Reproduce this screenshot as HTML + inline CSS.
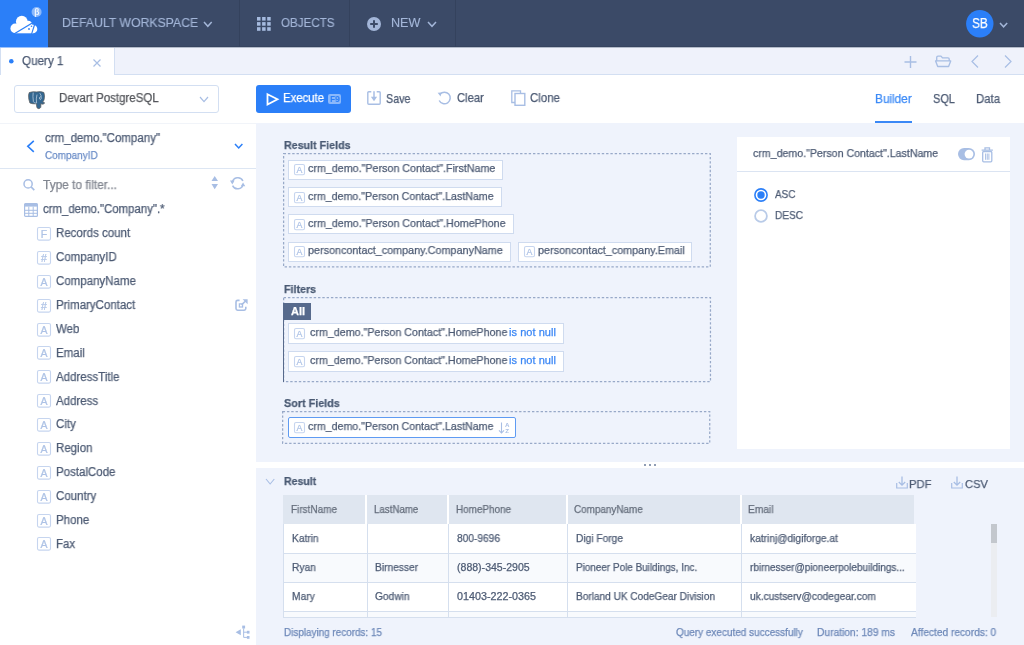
<!DOCTYPE html><html><head><meta charset="utf-8"><style>
html,body{margin:0;padding:0;width:1024px;height:645px;overflow:hidden;background:#fff;font-family:"Liberation Sans",sans-serif;}
.t{position:absolute;white-space:nowrap;line-height:16px;-webkit-text-stroke:0.25px currentColor;will-change:transform;}
.r{position:absolute;box-sizing:border-box;}
svg.r{overflow:visible;will-change:transform}
</style></head><body>
<div class="r" style="left:0.00px;top:0.00px;width:1024.00px;height:47.00px;background:#3b4a67"></div>
<div class="r" style="left:0.00px;top:46.00px;width:1024.00px;height:1.00px;background:#36445f"></div>
<div class="r" style="left:0.00px;top:47.00px;width:1024.00px;height:1.00px;background:#b3bbca"></div>
<div class="r" style="left:0.00px;top:0.00px;width:48.00px;height:47.00px;background:#2b7ff8"></div>
<div class="r" style="left:0.00px;top:47.00px;width:48.00px;height:1.00px;background:#9cc2fb"></div>
<svg class="r" style="left:0.00px;top:0.00px" width="48" height="48" viewBox="0 0 48 48">
<g fill="#fff"><circle cx="15.2" cy="28.4" r="4.8"/><circle cx="21.8" cy="21.6" r="5.9"/><circle cx="28.2" cy="25" r="4.2"/><circle cx="33" cy="29" r="4.3"/><rect x="15" y="25" width="18" height="8.3"/></g>
<path d="M13.5 34.2 L33.5 22.2" stroke="#2b7ff8" stroke-width="1.3"/>
<path d="M31.6 34 L34.6 24.5" stroke="#2b7ff8" stroke-width="1.1"/>
<circle cx="29" cy="29" r="0.9" fill="#2b7ff8"/><circle cx="31.5" cy="26.2" r="0.8" fill="#2b7ff8"/>
<circle cx="36.6" cy="12" r="5" fill="#fff" fill-opacity="0.45"/>
<text x="36.8" y="15.3" font-size="8.5" text-anchor="middle" fill="#ffffff" fill-opacity="0.85" font-family="Liberation Sans" font-weight="700">β</text>
</svg>
<div class="t" style="left:61.70px;top:15.43px;font-size:12.6px;color:#a3b6d8;transform:scaleX(0.9731);transform-origin:0 0;-webkit-text-stroke:0.15px">DEFAULT WORKSPACE</div>
<svg class="r" style="left:202.30px;top:20.20px" width="11.699999999999989" height="8.3" viewBox="0 0 11.699999999999989 8.3"><path d="M2 2 L5.849999999999994 6.300000000000001 L9.699999999999989 2" fill="none" stroke="#a3b6d8" stroke-width="1.5"/></svg>
<div class="r" style="left:239.00px;top:0.00px;width:1.00px;height:47.00px;background:#34425d"></div>
<div class="r" style="left:349.00px;top:0.00px;width:1.00px;height:47.00px;background:#34425d"></div>
<div class="r" style="left:455.00px;top:0.00px;width:1.00px;height:47.00px;background:#34425d"></div>
<svg class="r" style="left:256.90px;top:16.90px" width="14" height="14" viewBox="0 0 14 14"><rect x="0.00" y="0.00" width="3.5" height="3.6" fill="#a6bbdf"/><rect x="5.10" y="0.00" width="3.5" height="3.6" fill="#a6bbdf"/><rect x="10.20" y="0.00" width="3.5" height="3.6" fill="#a6bbdf"/><rect x="0.00" y="5.10" width="3.5" height="3.6" fill="#a6bbdf"/><rect x="5.10" y="5.10" width="3.5" height="3.6" fill="#a6bbdf"/><rect x="10.20" y="5.10" width="3.5" height="3.6" fill="#a6bbdf"/><rect x="0.00" y="10.20" width="3.5" height="3.6" fill="#a6bbdf"/><rect x="5.10" y="10.20" width="3.5" height="3.6" fill="#a6bbdf"/><rect x="10.20" y="10.20" width="3.5" height="3.6" fill="#a6bbdf"/></svg>
<div class="t" style="left:281.30px;top:15.23px;font-size:12.6px;color:#a3b6d8;transform:scaleX(0.9209);transform-origin:0 0;-webkit-text-stroke:0.15px">OBJECTS</div>
<svg class="r" style="left:367.00px;top:17.00px" width="14" height="14" viewBox="0 0 14 14"><circle cx="7" cy="7" r="7" fill="#a3b6d8"/><path d="M7 3.2V10.8M3.2 7H10.8" stroke="#3b4a67" stroke-width="2"/></svg>
<div class="t" style="left:390.70px;top:15.03px;font-size:12.6px;color:#a3b6d8;transform:scaleX(0.9867);transform-origin:0 0;-webkit-text-stroke:0.15px">NEW</div>
<svg class="r" style="left:426.00px;top:20.20px" width="12" height="8.3" viewBox="0 0 12 8.3"><path d="M2 2 L6.0 6.300000000000001 L10 2" fill="none" stroke="#a3b6d8" stroke-width="1.5"/></svg>
<svg class="r" style="left:966.00px;top:10.00px" width="28" height="28" viewBox="0 0 28 28"><circle cx="13.8" cy="13.8" r="13.7" fill="#2b7ff8"/></svg>
<div class="t" style="left:971.60px;top:15.38px;font-size:14.2px;color:#ffffff;transform:scaleX(0.8343);transform-origin:0 0;">SB</div>
<svg class="r" style="left:998.00px;top:20.50px" width="11.200000000000045" height="7.800000000000001" viewBox="0 0 11.200000000000045 7.800000000000001"><path d="M2 2 L5.600000000000023 5.800000000000001 L9.200000000000045 2" fill="none" stroke="#a3b6d8" stroke-width="1.5"/></svg>
<div class="r" style="left:0.00px;top:48.00px;width:1024.00px;height:27.00px;background:#eff2fb;border-bottom:1px solid #d3dff2"></div>
<div class="r" style="left:0.00px;top:48.00px;width:115.00px;height:27.00px;background:#fff;border-left:1px solid #d3dff2;border-right:1px solid #d3dff2"></div>
<svg class="r" style="left:9.40px;top:58.80px" width="5" height="5" viewBox="0 0 5 5"><circle cx="2.3" cy="2.3" r="2.3" fill="#2b7ff8"/></svg>
<div class="t" style="left:21.80px;top:52.50px;font-size:12.1px;color:#4d5b74;transform:scaleX(0.9621);transform-origin:0 0;">Query 1</div>
<svg class="r" style="left:92.70px;top:59.20px" width="8" height="8" viewBox="0 0 8 8"><path d="M0.5 0.5L7.5 7.5M7.5 0.5L0.5 7.5" stroke="#a8bee4" stroke-width="1.2"/></svg>
<svg class="r" style="left:904.00px;top:55.50px" width="13" height="12" viewBox="0 0 13 12"><path d="M6.5 0V12M0.5 6H12.5" stroke="#a8bee4" stroke-width="1.4"/></svg>
<svg class="r" style="left:930.00px;top:50.00px" width="30" height="22" viewBox="0 0 30 22"><path d="M6.7 10.6 V7.4 Q6.7 6.1 8 6.1 H11 L12.5 7.9 H18 Q19.2 7.9 19.2 9.1 V10.6 M5.6 10.9 H20.7 L18.6 16.5 H7.7 Z" fill="none" stroke="#a8bee4" stroke-width="1.35" stroke-linejoin="round"/></svg>
<svg class="r" style="left:971.00px;top:55.00px" width="8" height="13" viewBox="0 0 8 13"><path d="M7 0.5 L1 6.5 L7 12.5" fill="none" stroke="#a8bee4" stroke-width="1.2"/></svg>
<svg class="r" style="left:1004.00px;top:55.00px" width="8" height="13" viewBox="0 0 8 13"><path d="M1 0.5 L7 6.5 L1 12.5" fill="none" stroke="#a8bee4" stroke-width="1.2"/></svg>
<div class="r" style="left:14.00px;top:85.00px;width:204.50px;height:27.50px;border:1px solid #d3dff2;border-radius:3px;background:#fff"></div>
<svg class="r" style="left:28.00px;top:91.00px" width="17" height="18.5" viewBox="0 0 17 18.5"><path d="M1.2 1.6 Q4.5 0.2 8.6 0.9 Q13 0.1 15.9 1.5 Q17 4.5 16.2 8.2 Q15.7 10.2 14.6 11 L16.4 11.6 Q16.9 12.6 15.2 13.1 Q13.6 13.3 12.9 12.6 L12.8 16.3 Q12 17.9 10.1 17.6 Q8.6 17.1 8.6 15.2 L8.5 12.9 Q4.2 13 1.9 12 Q0.4 8.2 0.5 4.3 Z" fill="#336791" stroke="#5a5a5a" stroke-width="0.7"/>
<path d="M5.2 1.6 Q4.6 5 5.4 10.6 Q6.2 12.4 8.4 12.2 M8.6 12 Q7.8 8 9 3.6 M11.8 2.2 Q13.6 4 13.2 7.5 Q12.5 9.5 11.6 8 Q10.8 6.2 12.8 5.6" fill="none" stroke="#d6e2f0" stroke-width="0.65"/></svg>
<div class="t" style="left:59.30px;top:89.84px;font-size:12px;color:#54565b;transform:scaleX(0.9587);transform-origin:0 0;">Devart PostgreSQL</div>
<svg class="r" style="left:198.10px;top:95.00px" width="12.0" height="8.700000000000003" viewBox="0 0 12.0 8.700000000000003"><path d="M2 2 L6.0 6.700000000000003 L10.0 2" fill="none" stroke="#a8bee4" stroke-width="1.2"/></svg>
<div class="r" style="left:256.00px;top:85.00px;width:95.00px;height:28.00px;background:#2b7ff8;border-radius:3px"></div>
<svg class="r" style="left:266.00px;top:93.00px" width="13" height="13" viewBox="0 0 13 13"><path d="M1.5 1.2 L11.5 6.3 L1.5 11.5 Z" fill="none" stroke="#fff" stroke-width="1.8" stroke-linejoin="miter"/></svg>
<div class="t" style="left:282.90px;top:90.37px;font-size:12.2px;color:#ffffff;transform:scaleX(0.9331);transform-origin:0 0;">Execute</div>
<div class="r" style="left:328.00px;top:94.00px;width:13.40px;height:9.90px;background:rgba(255,255,255,0.45);border-radius:2px"></div>
<div class="t" style="left:329.70px;top:90.77px;font-size:9.6px;color:#2b7ff8;font-weight:700;transform:scaleX(0.8926);transform-origin:0 0;-webkit-text-stroke:0">F9</div>
<svg class="r" style="left:367.00px;top:91.00px" width="14" height="14" viewBox="0 0 14 14"><path d="M4.3 0.8 H1.8 Q0.8 0.8 0.8 1.8 V12.2 Q0.8 13.2 1.8 13.2 H12.2 Q13.2 13.2 13.2 12.2 V1.8 Q13.2 0.8 12.2 0.8 H9.7" fill="none" stroke="#a8bee4" stroke-width="1.4"/><path d="M7 0.3 V7" stroke="#a8bee4" stroke-width="1.5"/><path d="M3.9 5.8 H10.1 L7 10.3Z" fill="#a8bee4"/></svg>
<div class="t" style="left:385.90px;top:90.77px;font-size:12.2px;color:#4d5b74;transform:scaleX(0.8783);transform-origin:0 0;">Save</div>
<svg class="r" style="left:437.00px;top:90.80px" width="15" height="14.5" viewBox="0 0 15 14.5"><path d="M3 3.2 A5.8 5.8 0 1 1 2.2 9.5" fill="none" stroke="#a8bee4" stroke-width="1.5"/><path d="M0.6 1.8 L4.4 1.6 L3.6 5.6 Z" fill="#a8bee4"/></svg>
<div class="t" style="left:456.70px;top:90.47px;font-size:12.2px;color:#4d5b74;transform:scaleX(0.9236);transform-origin:0 0;">Clear</div>
<svg class="r" style="left:511.00px;top:90.00px" width="15" height="16" viewBox="0 0 15 16"><path d="M4 12.5 H0.8 V0.8 H9.5 V3.5" fill="none" stroke="#a8bee4" stroke-width="1.3"/><rect x="4" y="3.5" width="9.8" height="11.8" fill="none" stroke="#a8bee4" stroke-width="1.4"/></svg>
<div class="t" style="left:530.20px;top:90.47px;font-size:12.2px;color:#4d5b74;transform:scaleX(0.9421);transform-origin:0 0;">Clone</div>
<div class="t" style="left:874.90px;top:90.97px;font-size:12.2px;color:#3d8bf7;transform:scaleX(0.9674);transform-origin:0 0;">Builder</div>
<div class="r" style="left:875.00px;top:121.00px;width:37.00px;height:2.00px;background:#3a88f6"></div>
<div class="t" style="left:932.50px;top:90.97px;font-size:12.2px;color:#4d5b74;transform:scaleX(0.9020);transform-origin:0 0;">SQL</div>
<div class="t" style="left:975.60px;top:90.97px;font-size:12.2px;color:#4d5b74;transform:scaleX(0.9359);transform-origin:0 0;">Data</div>
<div class="r" style="left:0.00px;top:123.00px;width:256.00px;height:522.00px;background:#fff"></div>
<div class="r" style="left:0.00px;top:123.00px;width:256.00px;height:1.00px;background:#f1f4f9"></div>
<svg class="r" style="left:26.00px;top:139.50px" width="9" height="13" viewBox="0 0 9 13"><path d="M7.8 0.8 L1.8 6.3 L7.8 11.8" fill="none" stroke="#2b7ff8" stroke-width="1.6"/></svg>
<div class="t" style="left:44.70px;top:129.54px;font-size:12px;color:#4d5b74;transform:scaleX(0.9591);transform-origin:0 0;">crm_demo.&quot;Company&quot;</div>
<div class="t" style="left:44.70px;top:147.06px;font-size:10.8px;color:#6a8cc7;transform:scaleX(0.9243);transform-origin:0 0;">CompanyID</div>
<svg class="r" style="left:233.30px;top:142.30px" width="11.399999999999977" height="8.0" viewBox="0 0 11.399999999999977 8.0"><path d="M2 2 L5.699999999999989 6.0 L9.399999999999977 2" fill="none" stroke="#2b7ff8" stroke-width="1.5"/></svg>
<div class="r" style="left:0.00px;top:168.00px;width:256.00px;height:1.00px;background:#dde6f3"></div>
<svg class="r" style="left:23.00px;top:178.50px" width="13" height="13" viewBox="0 0 13 13"><circle cx="5.1" cy="4.9" r="4.1" fill="none" stroke="#a8bee4" stroke-width="1.5"/><path d="M8.1 7.9 L11.3 11.1" stroke="#a8bee4" stroke-width="1.6"/></svg>
<div class="t" style="left:43.40px;top:176.74px;font-size:12px;color:#80858f;transform:scaleX(0.9906);transform-origin:0 0;">Type to filter...</div>
<svg class="r" style="left:211.00px;top:176.00px" width="8" height="14" viewBox="0 0 8 14"><path d="M0.5 5 L3.7 0 L7 5Z M0.5 8 L3.7 13.2 L7 8Z" fill="#a8bee4"/></svg>
<svg class="r" style="left:229.50px;top:175.50px" width="16" height="14.5" viewBox="0 0 16 14.5"><path d="M2.4 6.6 A5.5 5.5 0 0 1 12.9 5 M13 8.3 A5.5 5.5 0 0 1 2.6 9.6" fill="none" stroke="#a8bee4" stroke-width="1.5"/><path d="M0 4.6 L4.6 4.6 L2.3 8.4Z M10.8 10.2 L15.3 10.2 L13.05 6.4Z" fill="#a8bee4"/></svg>
<svg class="r" style="left:24.00px;top:203.00px" width="14" height="14" viewBox="0 0 14 14"><rect x="0.6" y="0.6" width="12.8" height="12.8" rx="1" fill="none" stroke="#a8bee4" stroke-width="1.2"/><rect x="0.6" y="0.6" width="12.8" height="3" fill="#a8bee4"/><path d="M0.6 7.3H13.4M0.6 10.3H13.4M4.8 3.6V13.4M9.2 3.6V13.4" stroke="#a8bee4" stroke-width="1"/></svg>
<div class="t" style="left:43.00px;top:200.84px;font-size:12px;color:#4d5b74;transform:scaleX(0.9499);transform-origin:0 0;">crm_demo.&quot;Company&quot;.*</div>
<svg class="r" style="left:37.10px;top:227.00px" width="14" height="13.6" viewBox="0 0 14 13.6"><rect x="0.5" y="0.5" width="13" height="12.6" rx="1.5" fill="#fff" stroke="#c6d5ef" stroke-width="1.1"/><text x="7.0" y="10.5275" font-size="10.5" text-anchor="middle" fill="#aec3e6" stroke="#aec3e6" stroke-width="0.25" font-family="Liberation Sans">F</text></svg>
<div class="t" style="left:56.30px;top:225.34px;font-size:12px;color:#4d5b74;transform:scaleX(0.9584);transform-origin:0 0;">Records count</div>
<svg class="r" style="left:37.10px;top:250.88px" width="14" height="13.6" viewBox="0 0 14 13.6"><rect x="0.5" y="0.5" width="13" height="12.6" rx="1.5" fill="#fff" stroke="#c6d5ef" stroke-width="1.1"/><text x="7.0" y="10.5275" font-size="10.5" text-anchor="middle" fill="#aec3e6" stroke="#aec3e6" stroke-width="0.25" font-family="Liberation Sans">#</text></svg>
<div class="t" style="left:56.30px;top:249.22px;font-size:12px;color:#4d5b74;transform:scaleX(0.9583);transform-origin:0 0;">CompanyID</div>
<svg class="r" style="left:37.10px;top:274.76px" width="14" height="13.6" viewBox="0 0 14 13.6"><rect x="0.5" y="0.5" width="13" height="12.6" rx="1.5" fill="#fff" stroke="#c6d5ef" stroke-width="1.1"/><text x="7.0" y="10.5275" font-size="10.5" text-anchor="middle" fill="#aec3e6" stroke="#aec3e6" stroke-width="0.25" font-family="Liberation Sans">A</text></svg>
<div class="t" style="left:56.30px;top:273.10px;font-size:12px;color:#4d5b74;transform:scaleX(0.9584);transform-origin:0 0;">CompanyName</div>
<svg class="r" style="left:37.10px;top:298.64px" width="14" height="13.6" viewBox="0 0 14 13.6"><rect x="0.5" y="0.5" width="13" height="12.6" rx="1.5" fill="#fff" stroke="#c6d5ef" stroke-width="1.1"/><text x="7.0" y="10.5275" font-size="10.5" text-anchor="middle" fill="#aec3e6" stroke="#aec3e6" stroke-width="0.25" font-family="Liberation Sans">#</text></svg>
<div class="t" style="left:56.30px;top:296.98px;font-size:12px;color:#4d5b74;transform:scaleX(0.9584);transform-origin:0 0;">PrimaryContact</div>
<svg class="r" style="left:37.10px;top:322.52px" width="14" height="13.6" viewBox="0 0 14 13.6"><rect x="0.5" y="0.5" width="13" height="12.6" rx="1.5" fill="#fff" stroke="#c6d5ef" stroke-width="1.1"/><text x="7.0" y="10.5275" font-size="10.5" text-anchor="middle" fill="#aec3e6" stroke="#aec3e6" stroke-width="0.25" font-family="Liberation Sans">A</text></svg>
<div class="t" style="left:56.30px;top:320.86px;font-size:12px;color:#4d5b74;transform:scaleX(0.9585);transform-origin:0 0;">Web</div>
<svg class="r" style="left:37.10px;top:346.40px" width="14" height="13.6" viewBox="0 0 14 13.6"><rect x="0.5" y="0.5" width="13" height="12.6" rx="1.5" fill="#fff" stroke="#c6d5ef" stroke-width="1.1"/><text x="7.0" y="10.5275" font-size="10.5" text-anchor="middle" fill="#aec3e6" stroke="#aec3e6" stroke-width="0.25" font-family="Liberation Sans">A</text></svg>
<div class="t" style="left:56.30px;top:344.74px;font-size:12px;color:#4d5b74;transform:scaleX(0.9584);transform-origin:0 0;">Email</div>
<svg class="r" style="left:37.10px;top:370.28px" width="14" height="13.6" viewBox="0 0 14 13.6"><rect x="0.5" y="0.5" width="13" height="12.6" rx="1.5" fill="#fff" stroke="#c6d5ef" stroke-width="1.1"/><text x="7.0" y="10.5275" font-size="10.5" text-anchor="middle" fill="#aec3e6" stroke="#aec3e6" stroke-width="0.25" font-family="Liberation Sans">A</text></svg>
<div class="t" style="left:56.30px;top:368.62px;font-size:12px;color:#4d5b74;transform:scaleX(0.9585);transform-origin:0 0;">AddressTitle</div>
<svg class="r" style="left:37.10px;top:394.16px" width="14" height="13.6" viewBox="0 0 14 13.6"><rect x="0.5" y="0.5" width="13" height="12.6" rx="1.5" fill="#fff" stroke="#c6d5ef" stroke-width="1.1"/><text x="7.0" y="10.5275" font-size="10.5" text-anchor="middle" fill="#aec3e6" stroke="#aec3e6" stroke-width="0.25" font-family="Liberation Sans">A</text></svg>
<div class="t" style="left:56.30px;top:392.50px;font-size:12px;color:#4d5b74;transform:scaleX(0.9581);transform-origin:0 0;">Address</div>
<svg class="r" style="left:37.10px;top:418.04px" width="14" height="13.6" viewBox="0 0 14 13.6"><rect x="0.5" y="0.5" width="13" height="12.6" rx="1.5" fill="#fff" stroke="#c6d5ef" stroke-width="1.1"/><text x="7.0" y="10.5275" font-size="10.5" text-anchor="middle" fill="#aec3e6" stroke="#aec3e6" stroke-width="0.25" font-family="Liberation Sans">A</text></svg>
<div class="t" style="left:56.30px;top:416.38px;font-size:12px;color:#4d5b74;transform:scaleX(0.9584);transform-origin:0 0;">City</div>
<svg class="r" style="left:37.10px;top:441.92px" width="14" height="13.6" viewBox="0 0 14 13.6"><rect x="0.5" y="0.5" width="13" height="12.6" rx="1.5" fill="#fff" stroke="#c6d5ef" stroke-width="1.1"/><text x="7.0" y="10.5275" font-size="10.5" text-anchor="middle" fill="#aec3e6" stroke="#aec3e6" stroke-width="0.25" font-family="Liberation Sans">A</text></svg>
<div class="t" style="left:56.30px;top:440.26px;font-size:12px;color:#4d5b74;transform:scaleX(0.9585);transform-origin:0 0;">Region</div>
<svg class="r" style="left:37.10px;top:465.80px" width="14" height="13.6" viewBox="0 0 14 13.6"><rect x="0.5" y="0.5" width="13" height="12.6" rx="1.5" fill="#fff" stroke="#c6d5ef" stroke-width="1.1"/><text x="7.0" y="10.5275" font-size="10.5" text-anchor="middle" fill="#aec3e6" stroke="#aec3e6" stroke-width="0.25" font-family="Liberation Sans">A</text></svg>
<div class="t" style="left:56.30px;top:464.14px;font-size:12px;color:#4d5b74;transform:scaleX(0.9584);transform-origin:0 0;">PostalCode</div>
<svg class="r" style="left:37.10px;top:489.68px" width="14" height="13.6" viewBox="0 0 14 13.6"><rect x="0.5" y="0.5" width="13" height="12.6" rx="1.5" fill="#fff" stroke="#c6d5ef" stroke-width="1.1"/><text x="7.0" y="10.5275" font-size="10.5" text-anchor="middle" fill="#aec3e6" stroke="#aec3e6" stroke-width="0.25" font-family="Liberation Sans">A</text></svg>
<div class="t" style="left:56.30px;top:488.02px;font-size:12px;color:#4d5b74;transform:scaleX(0.9584);transform-origin:0 0;">Country</div>
<svg class="r" style="left:37.10px;top:513.56px" width="14" height="13.6" viewBox="0 0 14 13.6"><rect x="0.5" y="0.5" width="13" height="12.6" rx="1.5" fill="#fff" stroke="#c6d5ef" stroke-width="1.1"/><text x="7.0" y="10.5275" font-size="10.5" text-anchor="middle" fill="#aec3e6" stroke="#aec3e6" stroke-width="0.25" font-family="Liberation Sans">A</text></svg>
<div class="t" style="left:56.30px;top:511.90px;font-size:12px;color:#4d5b74;transform:scaleX(0.9586);transform-origin:0 0;">Phone</div>
<svg class="r" style="left:37.10px;top:537.44px" width="14" height="13.6" viewBox="0 0 14 13.6"><rect x="0.5" y="0.5" width="13" height="12.6" rx="1.5" fill="#fff" stroke="#c6d5ef" stroke-width="1.1"/><text x="7.0" y="10.5275" font-size="10.5" text-anchor="middle" fill="#aec3e6" stroke="#aec3e6" stroke-width="0.25" font-family="Liberation Sans">A</text></svg>
<div class="t" style="left:56.30px;top:535.78px;font-size:12px;color:#4d5b74;transform:scaleX(0.9578);transform-origin:0 0;">Fax</div>
<svg class="r" style="left:235.00px;top:298.50px" width="13" height="12.5" viewBox="0 0 13 12.5"><path d="M4.6 1.4 H2.6 Q1 1.4 1 3 V9.6 Q1 11.2 2.6 11.2 H9.2 Q10.8 11.2 10.8 9.6 V7.8" fill="none" stroke="#a8bee4" stroke-width="1.6"/><rect x="4.4" y="4.9" width="3.1" height="3.1" fill="none" stroke="#a8bee4" stroke-width="1.3"/><path d="M6.6 5.9 L10.8 1.7" stroke="#a8bee4" stroke-width="1.6"/><path d="M7.6 0.2 H12.6 V5.2Z" fill="#a8bee4"/></svg>
<svg class="r" style="left:235.00px;top:624.50px" width="15" height="14" viewBox="0 0 15 14"><path d="M0.6 7.2 L5.8 4.2 V10.2Z" fill="#a8bee4"/><rect x="7.2" y="0.6" width="2.9" height="2.9" fill="#a8bee4"/><path d="M8.65 3.4 V12.4 H12 M8.65 7.2 H12" fill="none" stroke="#a8bee4" stroke-width="1"/><rect x="11.9" y="5.8" width="2.6" height="2.8" fill="#a8bee4"/><rect x="11.9" y="11" width="2.6" height="2.8" fill="#a8bee4"/></svg>
<div class="r" style="left:256.00px;top:123.00px;width:768.00px;height:522.00px;background:#eff3fc"></div>
<div class="t" style="left:283.70px;top:137.01px;font-size:11.5px;color:#4a5a73;font-weight:700;transform:scaleX(0.9291);transform-origin:0 0;">Result Fields</div>
<svg class="r" style="left:282.70px;top:153.40px" width="427.90000000000003" height="114.4" viewBox="0 0 427.90000000000003 114.4"><rect x="0.6" y="0.6" width="426.70" height="113.20" fill="none" stroke="#98a9c8" stroke-width="1.25" stroke-dasharray="2.4 1.9"/></svg>
<div class="r" style="left:288.40px;top:159.60px;width:215.00px;height:20.00px;background:#fff;border:1px solid #cfdbef"></div>
<svg class="r" style="left:293.90px;top:163.90px" width="11" height="11.2" viewBox="0 0 11 11.2"><rect x="0.5" y="0.5" width="10" height="10.2" rx="1.5" fill="#fff" stroke="#c6d5ef" stroke-width="1.1"/><text x="5.5" y="8.724" font-size="8.8" text-anchor="middle" fill="#aec3e6" stroke="#aec3e6" stroke-width="0.25" font-family="Liberation Sans">A</text></svg>
<div class="t" style="left:308.00px;top:160.19px;font-size:11px;color:#4d5b74;transform:scaleX(0.9738);transform-origin:0 0;">crm_demo.&quot;Person Contact&quot;.FirstName</div>
<div class="r" style="left:288.40px;top:187.40px;width:213.20px;height:20.00px;background:#fff;border:1px solid #cfdbef"></div>
<svg class="r" style="left:293.90px;top:191.70px" width="11" height="11.2" viewBox="0 0 11 11.2"><rect x="0.5" y="0.5" width="10" height="10.2" rx="1.5" fill="#fff" stroke="#c6d5ef" stroke-width="1.1"/><text x="5.5" y="8.724" font-size="8.8" text-anchor="middle" fill="#aec3e6" stroke="#aec3e6" stroke-width="0.25" font-family="Liberation Sans">A</text></svg>
<div class="t" style="left:308.00px;top:187.99px;font-size:11px;color:#4d5b74;transform:scaleX(0.9675);transform-origin:0 0;">crm_demo.&quot;Person Contact&quot;.LastName</div>
<div class="r" style="left:288.40px;top:214.30px;width:225.20px;height:20.00px;background:#fff;border:1px solid #cfdbef"></div>
<svg class="r" style="left:293.90px;top:218.60px" width="11" height="11.2" viewBox="0 0 11 11.2"><rect x="0.5" y="0.5" width="10" height="10.2" rx="1.5" fill="#fff" stroke="#c6d5ef" stroke-width="1.1"/><text x="5.5" y="8.724" font-size="8.8" text-anchor="middle" fill="#aec3e6" stroke="#aec3e6" stroke-width="0.25" font-family="Liberation Sans">A</text></svg>
<div class="t" style="left:308.00px;top:214.89px;font-size:11px;color:#4d5b74;transform:scaleX(0.9741);transform-origin:0 0;">crm_demo.&quot;Person Contact&quot;.HomePhone</div>
<div class="r" style="left:288.40px;top:241.70px;width:222.30px;height:20.00px;background:#fff;border:1px solid #cfdbef"></div>
<svg class="r" style="left:293.90px;top:246.00px" width="11" height="11.2" viewBox="0 0 11 11.2"><rect x="0.5" y="0.5" width="10" height="10.2" rx="1.5" fill="#fff" stroke="#c6d5ef" stroke-width="1.1"/><text x="5.5" y="8.724" font-size="8.8" text-anchor="middle" fill="#aec3e6" stroke="#aec3e6" stroke-width="0.25" font-family="Liberation Sans">A</text></svg>
<div class="t" style="left:308.00px;top:242.29px;font-size:11px;color:#4d5b74;transform:scaleX(0.9808);transform-origin:0 0;">personcontact_company.CompanyName</div>
<div class="r" style="left:518.10px;top:241.70px;width:174.40px;height:20.00px;background:#fff;border:1px solid #cfdbef"></div>
<svg class="r" style="left:523.60px;top:246.00px" width="11" height="11.2" viewBox="0 0 11 11.2"><rect x="0.5" y="0.5" width="10" height="10.2" rx="1.5" fill="#fff" stroke="#c6d5ef" stroke-width="1.1"/><text x="5.5" y="8.724" font-size="8.8" text-anchor="middle" fill="#aec3e6" stroke="#aec3e6" stroke-width="0.25" font-family="Liberation Sans">A</text></svg>
<div class="t" style="left:537.70px;top:242.29px;font-size:11px;color:#4d5b74;transform:scaleX(0.9812);transform-origin:0 0;">personcontact_company.Email</div>
<div class="t" style="left:283.90px;top:280.81px;font-size:11.5px;color:#4a5a73;font-weight:700;transform:scaleX(0.9300);transform-origin:0 0;">Filters</div>
<svg class="r" style="left:282.50px;top:296.80px" width="428.1" height="85.19999999999999" viewBox="0 0 428.1 85.19999999999999"><rect x="0.6" y="0.6" width="426.90" height="84.00" fill="none" stroke="#98a9c8" stroke-width="1.25" stroke-dasharray="2.4 1.9"/></svg>
<div class="r" style="left:282.60px;top:302.60px;width:28.80px;height:17.00px;background:#576a8c"></div>
<div class="r" style="left:282.60px;top:302.60px;width:1.70px;height:79.20px;background:#576a8c"></div>
<div class="t" style="left:290.50px;top:302.79px;font-size:11px;color:#ffffff;font-weight:700;">All</div>
<div class="r" style="left:288.40px;top:323.10px;width:275.30px;height:20.70px;background:#fff;border:1px solid #cfdbef"></div>
<svg class="r" style="left:294.00px;top:327.60px" width="11" height="11.2" viewBox="0 0 11 11.2"><rect x="0.5" y="0.5" width="10" height="10.2" rx="1.5" fill="#fff" stroke="#c6d5ef" stroke-width="1.1"/><text x="5.5" y="8.724" font-size="8.8" text-anchor="middle" fill="#aec3e6" stroke="#aec3e6" stroke-width="0.25" font-family="Liberation Sans">A</text></svg>
<div class="t" style="left:309.60px;top:323.89px;font-size:11px;color:#4d5b74;transform:scaleX(0.9731);transform-origin:0 0;">crm_demo.&quot;Person Contact&quot;.HomePhone</div>
<div class="t" style="left:509.30px;top:323.89px;font-size:11px;color:#3b87f5;letter-spacing:0.042px;">is not null</div>
<div class="r" style="left:288.40px;top:351.30px;width:275.30px;height:20.70px;background:#fff;border:1px solid #cfdbef"></div>
<svg class="r" style="left:294.00px;top:355.80px" width="11" height="11.2" viewBox="0 0 11 11.2"><rect x="0.5" y="0.5" width="10" height="10.2" rx="1.5" fill="#fff" stroke="#c6d5ef" stroke-width="1.1"/><text x="5.5" y="8.724" font-size="8.8" text-anchor="middle" fill="#aec3e6" stroke="#aec3e6" stroke-width="0.25" font-family="Liberation Sans">A</text></svg>
<div class="t" style="left:309.60px;top:352.09px;font-size:11px;color:#4d5b74;transform:scaleX(0.9731);transform-origin:0 0;">crm_demo.&quot;Person Contact&quot;.HomePhone</div>
<div class="t" style="left:509.30px;top:352.09px;font-size:11px;color:#3b87f5;letter-spacing:0.042px;">is not null</div>
<div class="t" style="left:283.50px;top:395.01px;font-size:11.5px;color:#4a5a73;font-weight:700;transform:scaleX(0.9388);transform-origin:0 0;">Sort Fields</div>
<svg class="r" style="left:282.20px;top:410.90px" width="428.40000000000003" height="32.900000000000034" viewBox="0 0 428.40000000000003 32.900000000000034"><rect x="0.6" y="0.6" width="427.20" height="31.70" fill="none" stroke="#98a9c8" stroke-width="1.25" stroke-dasharray="2.4 1.9"/></svg>
<div class="r" style="left:288.30px;top:417.20px;width:227.30px;height:20.40px;background:#fff;border:1.6px solid #5f9bf2;border-radius:2px"></div>
<svg class="r" style="left:294.10px;top:421.70px" width="11" height="11.2" viewBox="0 0 11 11.2"><rect x="0.5" y="0.5" width="10" height="10.2" rx="1.5" fill="#fff" stroke="#c6d5ef" stroke-width="1.1"/><text x="5.5" y="8.724" font-size="8.8" text-anchor="middle" fill="#aec3e6" stroke="#aec3e6" stroke-width="0.25" font-family="Liberation Sans">A</text></svg>
<div class="t" style="left:308.10px;top:417.99px;font-size:11px;color:#4d5b74;transform:scaleX(0.9664);transform-origin:0 0;">crm_demo.&quot;Person Contact&quot;.LastName</div>
<svg class="r" style="left:498.00px;top:421.50px" width="13" height="12" viewBox="0 0 13 12"><path d="M3.5 0.5 V11 M1 8.3 L3.5 11 L6 8.3" fill="none" stroke="#a8bee4" stroke-width="1.1"/><text x="9.2" y="5" font-size="6.2" text-anchor="middle" fill="#a8bee4" font-weight="700" font-family="Liberation Sans">A</text><text x="9.2" y="11.2" font-size="6.2" text-anchor="middle" fill="#a8bee4" font-weight="700" font-family="Liberation Sans">Z</text></svg>
<div class="r" style="left:737.00px;top:137.00px;width:273.20px;height:311.60px;background:#fff"></div>
<div class="r" style="left:737.00px;top:171.00px;width:273.20px;height:1.30px;background:#dbe4f2"></div>
<div class="t" style="left:753.00px;top:145.25px;font-size:11.1px;color:#4d5b74;transform:scaleX(0.9567);transform-origin:0 0;">crm_demo.&quot;Person Contact&quot;.LastName</div>
<svg class="r" style="left:957.50px;top:148.00px" width="17" height="12.5" viewBox="0 0 17 12.5"><rect x="0" y="0" width="17" height="12.2" rx="6.1" fill="#a8bee4"/><circle cx="11" cy="6.1" r="4.4" fill="#fff"/></svg>
<svg class="r" style="left:980.50px;top:147.00px" width="12.5" height="15.5" viewBox="0 0 12.5 15.5"><path d="M0.6 3.2 H11.9 M4 3 V0.8 H8.5 V3" fill="none" stroke="#a8bee4" stroke-width="1.3"/><rect x="1.7" y="4.5" width="9.1" height="10.3" rx="1" fill="none" stroke="#a8bee4" stroke-width="1.3"/><path d="M4.6 6.5V12.8M6.25 6.5V12.8M7.9 6.5V12.8" stroke="#a8bee4" stroke-width="1"/></svg>
<svg class="r" style="left:754.00px;top:188.30px" width="14" height="14" viewBox="0 0 14 14"><circle cx="7" cy="7" r="6.1" fill="none" stroke="#2b7ff8" stroke-width="1.6"/><circle cx="7" cy="7" r="3.7" fill="#2b7ff8"/></svg>
<div class="t" style="left:775.00px;top:186.19px;font-size:11px;color:#4d5b74;transform:scaleX(0.9017);transform-origin:0 0;">ASC</div>
<svg class="r" style="left:754.00px;top:209.00px" width="14" height="14" viewBox="0 0 14 14"><circle cx="7" cy="7" r="5.9" fill="none" stroke="#b9cbe8" stroke-width="1.8"/></svg>
<div class="t" style="left:775.00px;top:206.59px;font-size:11px;color:#4d5b74;transform:scaleX(0.9194);transform-origin:0 0;">DESC</div>
<div class="r" style="left:256.00px;top:462.30px;width:768.00px;height:5.70px;background:#fff"></div>
<div class="r" style="left:644.10px;top:463.80px;width:1.80px;height:1.80px;background:#8f9db5"></div>
<div class="r" style="left:649.10px;top:463.80px;width:1.80px;height:1.80px;background:#8f9db5"></div>
<div class="r" style="left:654.10px;top:463.80px;width:1.80px;height:1.80px;background:#8f9db5"></div>
<svg class="r" style="left:263.60px;top:477.30px" width="12.299999999999955" height="9.0" viewBox="0 0 12.299999999999955 9.0"><path d="M2 2 L6.149999999999977 7.0 L10.299999999999955 2" fill="none" stroke="#a8bee4" stroke-width="1.1"/></svg>
<div class="t" style="left:283.50px;top:472.91px;font-size:11.5px;color:#4a5a73;font-weight:700;transform:scaleX(0.9188);transform-origin:0 0;">Result</div>
<svg class="r" style="left:896.00px;top:476.00px" width="12" height="13" viewBox="0 0 12 13"><path d="M6 0.5 V9 M2.8 6 L6 9.2 L9.2 6" fill="none" stroke="#a8bee4" stroke-width="1.3"/><path d="M0.7 7 V12 H11.3 V7" fill="none" stroke="#a8bee4" stroke-width="1.2"/></svg>
<div class="t" style="left:909.20px;top:475.94px;font-size:11.7px;color:#4d5b74;transform:scaleX(0.9626);transform-origin:0 0;">PDF</div>
<svg class="r" style="left:951.00px;top:476.00px" width="12" height="13" viewBox="0 0 12 13"><path d="M6 0.5 V9 M2.8 6 L6 9.2 L9.2 6" fill="none" stroke="#a8bee4" stroke-width="1.3"/><path d="M0.7 7 V12 H11.3 V7" fill="none" stroke="#a8bee4" stroke-width="1.2"/></svg>
<div class="t" style="left:964.70px;top:475.94px;font-size:11.7px;color:#4d5b74;transform:scaleX(0.9523);transform-origin:0 0;">CSV</div>
<div class="r" style="left:283.3px;top:494.9px;width:632.3px;height:122.2px;overflow:hidden">
</div>
<div class="r" style="left:283.30px;top:494.90px;width:630.40px;height:29.70px;background:#dfe6f0"></div>
<div class="r" style="left:365.20px;top:494.90px;width:1.90px;height:29.70px;background:#fff"></div>
<div class="r" style="left:447.00px;top:494.90px;width:1.90px;height:29.70px;background:#fff"></div>
<div class="r" style="left:565.80px;top:494.90px;width:1.90px;height:29.70px;background:#fff"></div>
<div class="r" style="left:739.80px;top:494.90px;width:1.90px;height:29.70px;background:#fff"></div>
<div class="r" style="left:283.30px;top:524.20px;width:632.30px;height:29.10px;background:#fff"></div>
<div class="r" style="left:283.30px;top:553.30px;width:632.30px;height:29.10px;background:#f8fafd"></div>
<div class="r" style="left:283.30px;top:582.40px;width:632.30px;height:28.90px;background:#fff"></div>
<div class="r" style="left:283.30px;top:611.30px;width:632.30px;height:5.80px;background:#f8fafd"></div>
<div class="r" style="left:283.30px;top:552.80px;width:632.30px;height:1.10px;background:#d5dfee"></div>
<div class="r" style="left:283.30px;top:581.90px;width:632.30px;height:1.10px;background:#d5dfee"></div>
<div class="r" style="left:283.30px;top:610.80px;width:632.30px;height:1.10px;background:#d5dfee"></div>
<div class="r" style="left:283.30px;top:616.50px;width:632.30px;height:0.80px;background:#d5dfee"></div>
<div class="r" style="left:283.30px;top:524.20px;width:1.00px;height:93.00px;background:#d5dfee"></div>
<div class="r" style="left:366.60px;top:524.20px;width:1.00px;height:93.00px;background:#d5dfee"></div>
<div class="r" style="left:448.40px;top:524.20px;width:1.00px;height:93.00px;background:#d5dfee"></div>
<div class="r" style="left:567.20px;top:524.20px;width:1.00px;height:93.00px;background:#d5dfee"></div>
<div class="r" style="left:741.20px;top:524.20px;width:1.00px;height:93.00px;background:#d5dfee"></div>
<div class="t" style="left:290.50px;top:501.79px;font-size:10.4px;color:#646d7b;transform:scaleX(0.9599);transform-origin:0 0;">FirstName</div>
<div class="t" style="left:373.80px;top:501.79px;font-size:10.4px;color:#646d7b;transform:scaleX(0.9354);transform-origin:0 0;">LastName</div>
<div class="t" style="left:455.60px;top:501.79px;font-size:10.4px;color:#646d7b;transform:scaleX(0.9521);transform-origin:0 0;">HomePhone</div>
<div class="t" style="left:574.40px;top:501.79px;font-size:10.4px;color:#646d7b;transform:scaleX(0.9517);transform-origin:0 0;">CompanyName</div>
<div class="t" style="left:748.40px;top:501.79px;font-size:10.4px;color:#646d7b;transform:scaleX(0.9808);transform-origin:0 0;">Email</div>
<div class="t" style="left:291.80px;top:530.69px;font-size:10.4px;color:#4d5b74;transform:scaleX(0.9804);transform-origin:0 0;">Katrin</div>
<div class="t" style="left:456.90px;top:530.69px;font-size:10.4px;color:#4d5b74;transform:scaleX(0.9804);transform-origin:0 0;">800-9696</div>
<div class="t" style="left:575.70px;top:530.69px;font-size:10.4px;color:#4d5b74;transform:scaleX(0.9804);transform-origin:0 0;">Digi Forge</div>
<div class="t" style="left:749.70px;top:530.69px;font-size:10.4px;color:#4d5b74;transform:scaleX(0.9805);transform-origin:0 0;">katrinj@digiforge.at</div>
<div class="t" style="left:291.80px;top:559.69px;font-size:10.4px;color:#4d5b74;transform:scaleX(0.9807);transform-origin:0 0;">Ryan</div>
<div class="t" style="left:375.10px;top:559.69px;font-size:10.4px;color:#4d5b74;transform:scaleX(0.9804);transform-origin:0 0;">Birnesser</div>
<div class="t" style="left:456.90px;top:559.69px;font-size:10.4px;color:#4d5b74;transform:scaleX(1.0148);transform-origin:0 0;">(888)-345-2905</div>
<div class="t" style="left:575.70px;top:559.69px;font-size:10.4px;color:#4d5b74;transform:scaleX(0.9537);transform-origin:0 0;">Pioneer Pole Buildings, Inc.</div>
<div class="t" style="left:749.70px;top:559.69px;font-size:10.4px;color:#4d5b74;transform:scaleX(0.9631);transform-origin:0 0;">rbirnesser@pioneerpolebuildings...</div>
<div class="t" style="left:291.80px;top:588.69px;font-size:10.4px;color:#4d5b74;transform:scaleX(0.9804);transform-origin:0 0;">Mary</div>
<div class="t" style="left:375.10px;top:588.69px;font-size:10.4px;color:#4d5b74;transform:scaleX(0.9805);transform-origin:0 0;">Godwin</div>
<div class="t" style="left:456.90px;top:588.69px;font-size:10.4px;color:#4d5b74;transform:scaleX(1.0356);transform-origin:0 0;">01403-222-0365</div>
<div class="t" style="left:575.70px;top:588.69px;font-size:10.4px;color:#4d5b74;transform:scaleX(0.9704);transform-origin:0 0;">Borland UK CodeGear Division</div>
<div class="t" style="left:749.70px;top:588.69px;font-size:10.4px;color:#4d5b74;transform:scaleX(0.9804);transform-origin:0 0;">uk.custserv@codegear.com</div>
<div class="r" style="left:991.00px;top:523.70px;width:6.00px;height:93.30px;background:#ebedf1"></div>
<div class="r" style="left:991.00px;top:523.70px;width:6.00px;height:19.70px;background:#c3c7cd"></div>
<div class="t" style="left:283.90px;top:623.76px;font-size:10.5px;color:#6d88b8;transform:scaleX(0.9433);transform-origin:0 0;">Displaying records: 15</div>
<div class="t" style="left:675.60px;top:624.36px;font-size:10.5px;color:#6d88b8;transform:scaleX(0.9487);transform-origin:0 0;">Query executed successfully</div>
<div class="t" style="left:817.00px;top:624.36px;font-size:10.5px;color:#6d88b8;transform:scaleX(0.9754);transform-origin:0 0;">Duration: 189 ms</div>
<div class="t" style="left:911.00px;top:624.36px;font-size:10.5px;color:#6d88b8;transform:scaleX(0.9689);transform-origin:0 0;">Affected records: 0</div>
</body></html>
